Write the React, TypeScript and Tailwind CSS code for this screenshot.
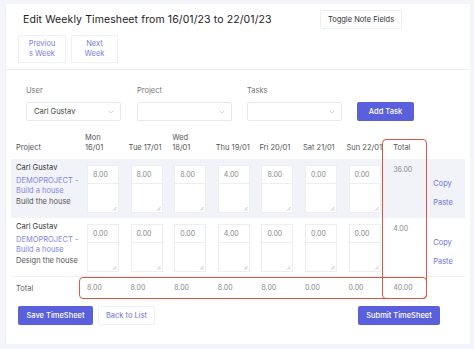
import { ChevronDown } from "lucide-react";

const days = [
  { label: ["Mon", "16/01"] },
  { label: ["Tue 17/01"] },
  { label: ["Wed", "18/01"] },
  { label: ["Thu 19/01"] },
  { label: ["Fri 20/01"] },
  { label: ["Sat 21/01"] },
  { label: ["Sun 22/01"] },
];

const rows = [
  {
    user: "Carl Gustav",
    project: "DEMOPROJECT -",
    sub: "Build a house",
    task: "Build the house",
    hours: ["8.00", "8.00", "8.00", "4.00", "8.00", "0.00", "0.00"],
    total: "36.00",
    shaded: true,
  },
  {
    user: "Carl Gustav",
    project: "DEMOPROJECT -",
    sub: "Build a house",
    task: "Design the house",
    hours: ["0.00", "0.00", "0.00", "4.00", "0.00", "0.00", "0.00"],
    total: "4.00",
    shaded: false,
  },
];

const totals = ["8.00", "8.00", "8.00", "8.00", "8.00", "0.00", "0.00"];

const gridCols = "grid grid-cols-[70px_repeat(7,43.6px)_45px_35px]";

function SelectBox({ value }: { value?: string }) {
  return (
    <div className="w-[95px] h-[19px] border border-[#e6e8ef] rounded-[2px] flex items-center pl-[7px] pr-[5px] text-[7.5px] text-[#444]">
      <span className="flex-1">{value}</span>
      <ChevronDown size={8} strokeWidth={1.5} className="text-[#aaa]" />
    </div>
  );
}

function Cell({ value }: { value: string }) {
  return (
    <div className="pl-[6px] pt-[6px]">
      <div className="w-[32px] border border-[#eceef3] bg-white">
        <div className="h-[18px] flex items-center pl-[5px] text-[7px] text-[#8a8a8a] border-b border-[#eceef3]">
          {value}
        </div>
        <div className="h-[28px] relative">
          <svg className="absolute right-[1px] bottom-[1px]" width="5" height="5" viewBox="0 0 5 5">
            <path d="M4.5 1 L1 4.5 M4.5 3 L3 4.5" stroke="#b5b5b5" strokeWidth="0.8" />
          </svg>
        </div>
      </div>
    </div>
  );
}

export default function App() {
  return (
    <div
      className="min-h-screen bg-[#f4f5fa] pt-[4px] pl-[5px] pr-[4px]"
      style={{ fontFamily: "Inter, 'Noto Sans', sans-serif" }}
    >
      <div className="bg-white min-h-[340px] border-l border-[#eef0f5]">
        {/* Header */}
        <div className="pl-[12px] pt-[6px] pb-[6px] border-b border-[#eef0f5]">
          <div className="flex items-center h-[19px]">
            <h1 className="ml-[5px] text-[10.5px] text-[#222] tracking-[0.1px]">
              Edit Weekly Timesheet from 16/01/23 to 22/01/23
            </h1>
            <button className="ml-auto mr-[68px] w-[82px] h-[19px] border border-[#eceef3] rounded-[2px] text-[7.5px] text-[#333]">
              Toggle Note Fields
            </button>
          </div>
          <div className="flex gap-[5px] mt-[6px]">
            <button className="w-[48px] h-[28px] border border-[#eef0f5] text-[7.5px] leading-[10px] text-[#7b7fe0]">
              Previou
              <br />s Week
            </button>
            <button className="w-[47px] h-[28px] border border-[#eef0f5] text-[7.5px] leading-[10px] text-[#7b7fe0]">
              Next
              <br />
              Week
            </button>
          </div>
        </div>

        {/* Filters */}
        <div className="pl-[20px] pt-[15px] flex items-end gap-[16px]">
          <div>
            <div className="text-[7.5px] text-[#777] mb-[6px]">User</div>
            <SelectBox value="Carl Gustav" />
          </div>
          <div>
            <div className="text-[7.5px] text-[#777] mb-[6px]">Project</div>
            <SelectBox />
          </div>
          <div className="-ml-[1px]">
            <div className="text-[7.5px] text-[#777] mb-[6px]">Tasks</div>
            <SelectBox />
          </div>
          <button className="ml-[-1px] w-[57px] h-[19px] bg-[#5a5fdb] rounded-[2px] text-white text-[7.5px] font-medium">
            Add Task
          </button>
        </div>

        {/* Table */}
        <div className="relative mx-[5px] mt-[4px]">
          <div className={`${gridCols} h-[34px] items-end pb-[6px] text-[7.5px] text-[#555] leading-[10px]`}>
            <div className="pl-[5px]">Project</div>
            {days.map((d, i) => (
              <div key={i} className="pl-[4px] whitespace-nowrap">
                {d.label.map((l, j) => (
                  <div key={j}>{l}</div>
                ))}
              </div>
            ))}
            <div className="pl-[7px]">Total</div>
            <div />
          </div>

          {rows.map((r, i) => (
            <div
              key={i}
              className={`${gridCols} h-[59px] ${r.shaded ? "bg-[#f2f3f8]" : "bg-white border-b border-[#f0f1f5]"}`}
            >
              <div className="pl-[5px] pt-[4px] text-[7.5px] leading-[10.5px]">
                <div className="text-[#333]">{r.user}</div>
                <div className="text-[#8286e3] mt-[2px]">{r.project}</div>
                <div className="text-[#8286e3]">{r.sub}</div>
                <div className="text-[#555]">{r.task}</div>
              </div>
              {r.hours.map((h, j) => (
                <Cell key={j} value={h} />
              ))}
              <div className="pl-[7px] pt-[6px] text-[7px] text-[#8a8a8a]">{r.total}</div>
              <div className="flex flex-col gap-[10px] pt-[20px] pl-[2px] text-[7.5px] leading-[9px] text-[#6d71d9]">
                <span>Copy</span>
                <span>Paste</span>
              </div>
            </div>
          ))}

          <div className={`${gridCols} h-[22px] items-center text-[7px] text-[#8a8a8a]`}>
            <div className="pl-[5px] text-[7.5px] text-[#666]">Total</div>
            {totals.map((t, i) => (
              <div key={i} className="pl-[6px]">
                {t}
              </div>
            ))}
            <div className="pl-[7px]">40.00</div>
            <div />
          </div>

          {/* annotation outlines */}
          <div className="absolute left-[371px] top-[14px] w-[45px] h-[160px] border-[1.5px] border-[#d9573f] rounded-[4px] pointer-events-none" />
          <div className="absolute left-[68px] top-[152px] w-[348px] h-[22px] border-[1.5px] border-[#d9573f] rounded-[4px] pointer-events-none" />
        </div>

        {/* Footer buttons */}
        <div className="flex items-center pl-[12px] pr-[30px] mt-[7px]">
          <button className="w-[75px] h-[19px] bg-[#5a5fdb] rounded-[2px] text-white text-[7.5px] font-medium">
            Save TimeSheet
          </button>
          <button className="ml-[5px] w-[57px] h-[19px] border border-[#eef0f5] rounded-[2px] text-[#6d71d9] text-[7.5px]">
            Back to List
          </button>
          <button className="ml-auto w-[82px] h-[19px] bg-[#5a5fdb] rounded-[2px] text-white text-[7.5px] font-medium">
            Submit TimeSheet
          </button>
        </div>
      </div>
    </div>
  );
}
